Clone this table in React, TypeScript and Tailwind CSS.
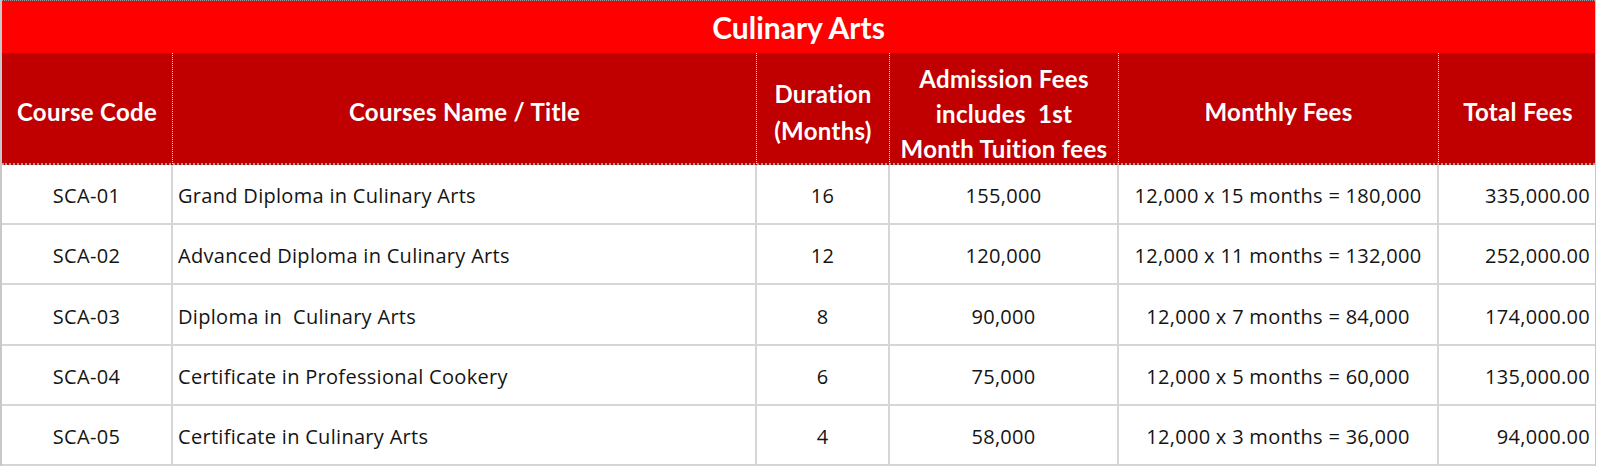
import React from "react";

type Course = {
  code: string;
  name: string;
  duration: string;
  admission: string;
  monthly: string;
  total: string;
};

const courses: Course[] = [
  { code: "SCA-01", name: "Grand Diploma in Culinary Arts", duration: "16", admission: "155,000", monthly: "12,000 x 15 months = 180,000", total: "335,000.00" },
  { code: "SCA-02", name: "Advanced Diploma in Culinary Arts", duration: "12", admission: "120,000", monthly: "12,000 x 11 months = 132,000", total: "252,000.00" },
  { code: "SCA-03", name: "Diploma in  Culinary Arts", duration: "8", admission: "90,000", monthly: "12,000 x 7 months = 84,000", total: "174,000.00" },
  { code: "SCA-04", name: "Certificate in Professional Cookery", duration: "6", admission: "75,000", monthly: "12,000 x 5 months = 60,000", total: "135,000.00" },
  { code: "SCA-05", name: "Certificate in Culinary Arts", duration: "4", admission: "58,000", monthly: "12,000 x 3 months = 36,000", total: "94,000.00" },
];

const cols = "grid grid-cols-[171px_584px_133px_229px_320px_158px]";

export default function App() {
  return (
    <div className="w-[1597px] h-[468px] bg-white font-['Lato','Open_Sans',sans-serif] text-[#141414]">
      <div className="w-[1596px] border-l-2 border-r border-[#c8c8c8]">
        {/* title */}
        <div className="h-[53px] bg-[#ff0000] border-t border-dotted border-[#9a9a9a] flex items-center justify-center">
          <span className="text-[30px] font-bold text-white leading-none">Culinary Arts</span>
        </div>

        {/* header row */}
        <div className={`${cols} h-[112px] bg-[#c00000] border-b-2 border-dotted border-[#a0a0a0] text-white font-bold text-[24px] tracking-[0.3px]`}>
          <div className="flex items-center justify-center border-r border-dotted border-[#e0e0e0] pt-1">Course Code</div>
          <div className="flex items-center justify-center border-r border-dotted border-[#e0e0e0] pt-1">Courses Name / Title</div>
          <div className="flex items-center justify-center text-center leading-[37px] border-r border-dotted border-[#e0e0e0] pt-[5px]">
            Duration
            <br />
            (Months)
          </div>
          <div className="flex items-center justify-center text-center leading-[35px] border-r border-dotted border-[#e0e0e0] whitespace-pre pt-[8px]">
            {"Admission Fees\nincludes  1st\nMonth Tuition fees"}
          </div>
          <div className="flex items-center justify-center border-r border-dotted border-[#e0e0e0] pt-1">Monthly Fees</div>
          <div className="flex items-center justify-center pt-1">Total Fees</div>
        </div>

        {/* data rows */}
        {courses.map((c, i) => (
          <div
            key={c.code}
            className={`${cols} ${i === 2 ? "h-[61px]" : "h-[60px]"} border-b-2 border-[#d6d6d6] text-[20px] tracking-[0.3px] font-['Open_Sans',sans-serif]`}
          >
            <div className="flex items-center justify-center border-r-2 border-[#d6d6d6] pt-1">{c.code}</div>
            <div className="flex items-center pl-[5px] border-r-2 border-[#d6d6d6] whitespace-pre pt-1">{c.name}</div>
            <div className="flex items-center justify-center border-r-2 border-[#d6d6d6] pt-1">{c.duration}</div>
            <div className="flex items-center justify-center border-r-2 border-[#d6d6d6] pt-1">{c.admission}</div>
            <div className="flex items-center justify-center border-r-2 border-[#d6d6d6] pt-1">{c.monthly}</div>
            <div className="flex items-center justify-end pr-[7px] pt-1">{c.total}</div>
          </div>
        ))}
      </div>
    </div>
  );
}
